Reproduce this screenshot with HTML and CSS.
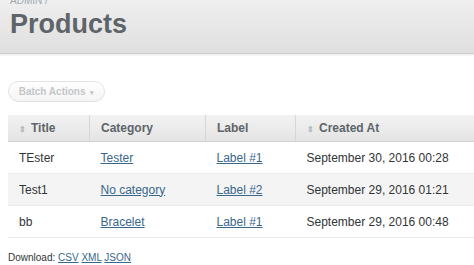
FILE: index.html
```html
<!DOCTYPE html>
<html lang="en">
<head>
  <meta charset="UTF-8">
  <title>Products</title>
  <link rel="stylesheet" href="styles.css">
</head>
<body>
  <div class="title-bar">
    <div class="breadcrumb">ADMIN /</div>
    <h2 class="page-title">Products</h2>
  </div>

  <div class="main-content">
    <div class="table-tools">
      <button class="batch-button">Batch Actions <span class="caret">&#9662;</span></button>
    </div>

    <table class="index-table">
      <thead>
        <tr>
          <th class="col-title sortable"><span class="sort">&#8661;</span>Title</th>
          <th class="col-category">Category</th>
          <th class="col-label">Label</th>
          <th class="col-created sortable"><span class="sort">&#8661;</span>Created At</th>
        </tr>
      </thead>
      <tbody>
        <tr>
          <td>TEster</td>
          <td><a href="#">Tester</a></td>
          <td><a href="#">Label #1</a></td>
          <td>September 30, 2016 00:28</td>
        </tr>
        <tr class="even">
          <td>Test1</td>
          <td><a href="#">No category</a></td>
          <td><a href="#">Label #2</a></td>
          <td>September 29, 2016 01:21</td>
        </tr>
        <tr>
          <td>bb</td>
          <td><a href="#">Bracelet</a></td>
          <td><a href="#">Label #1</a></td>
          <td>September 29, 2016 00:48</td>
        </tr>
      </tbody>
    </table>

    <div class="download-links">
      Download: <a href="#">CSV</a> <a href="#">XML</a> <a href="#">JSON</a>
    </div>
  </div>
</body>
</html>
```

FILE: styles.css
```css
body {
  margin: 0;
  font-family: "Liberation Sans", Arial, sans-serif;
  font-size: 12px;
  color: #323537;
  background-color: #fff;
}

a {
  color: #38678b;
  text-decoration: underline;
}

.title-bar {
  height: 53px;
  padding: 0 10px;
  background: linear-gradient(#efefef, #dfdfdf);
  border-bottom: 1px solid #cdcdcd;
  box-shadow: 0 1px 2px #e6e6e6;
  overflow: hidden;
}

.breadcrumb {
  margin-top: -5px;
  height: 12px;
  font-size: 10px;
  line-height: 12px;
  color: #a0a8b0;
}

.page-title {
  margin: 2px 0 0;
  font-size: 27px;
  line-height: 30px;
  font-weight: bold;
  color: #5e6469;
}

.main-content {
  padding: 27px 0 0 8px;
}

.table-tools {
  height: 21px;
  margin-bottom: 13px;
}

.batch-button {
  height: 21px;
  width: 97px;
  padding: 0;
  border: 1px solid #e2e2e2;
  border-radius: 11px;
  background: linear-gradient(#fff, #f4f4f4);
  font-family: "Liberation Sans", Arial, sans-serif;
  font-size: 10px;
  font-weight: bold;
  color: #c4c6c8;
}

.caret {
  font-size: 7px;
  margin-left: 2px;
}

.index-table {
  width: 466px;
  border-collapse: collapse;
}

.index-table th {
  height: 26px;
  padding: 0 11px;
  text-align: left;
  font-size: 12px;
  font-weight: bold;
  color: #5e6469;
  background: linear-gradient(#f2f2f2, #e4e4e4);
  border-right: 1px solid #d6d6d6;
  border-bottom: 1px solid #d2d2d2;
}

.index-table th:last-child {
  border-right: none;
}

.sort {
  display: inline-block;
  width: 12px;
  font-size: 8px;
  color: #b0b4b8;
}

.col-title { width: 59px; }
.col-category { width: 93px; }
.col-label { width: 67px; }

.index-table td {
  height: 31px;
  padding: 0 11px;
  border-bottom: 1px solid #ececec;
}

.index-table tr.even td {
  background-color: #f4f4f4;
}

.download-links {
  margin-top: 14px;
  font-size: 10px;
  color: #323537;
}
```
